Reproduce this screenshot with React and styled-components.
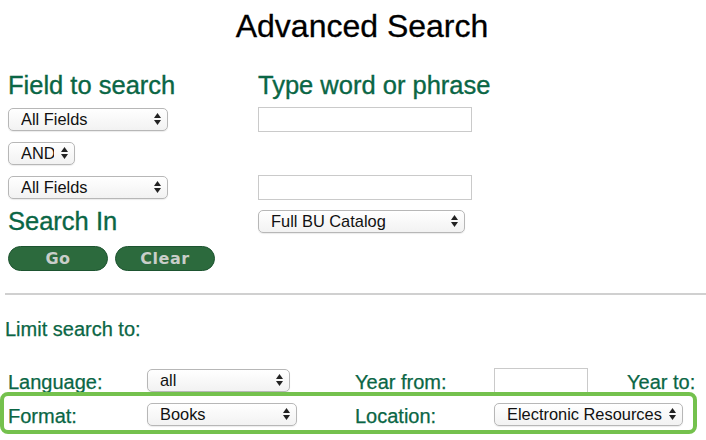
import React from 'react';
import styled, { createGlobalStyle } from 'styled-components';

const GlobalStyle = createGlobalStyle`
  html, body {
    margin: 0;
    padding: 0;
    background: #ffffff;
    font-family: "Liberation Sans", Arial, sans-serif;
  }
`;

const green = '#0a6645';

const Page = styled.div`
  width: 706px;
  height: 440px;
  overflow: hidden;
`;

const Title = styled.h1`
  margin: 11px 0 0;
  height: 30px;
  line-height: 30px;
  font-size: 32px;
  font-weight: normal;
  text-align: center;
  color: #000;
  padding-left: 18px;
  -webkit-text-stroke: 0.3px #000;
`;

const SearchGrid = styled.div`
  display: grid;
  grid-template-columns: 250px 1fr;
  grid-template-rows: 34px 34px 34px 34px 34px 40px;
  align-items: center;
  padding-left: 8px;
  margin-top: 27px;
`;

const Heading = styled.h2`
  margin: 0;
  font-size: 25.5px;
  line-height: 34px;
  font-weight: normal;
  color: ${green};
  -webkit-text-stroke: 0.35px ${green};
  white-space: nowrap;
`;

const SelectWrap = styled.div`
  position: relative;
  display: inline-flex;
  width: ${(p) => p.$w}px;
  height: 23px;
`;

const NativeSelect = styled.select`
  appearance: none;
  -webkit-appearance: none;
  width: 100%;
  height: 100%;
  margin: 0;
  padding: 0 20px 0 12px;
  border: 1px solid #b7b7b7;
  border-radius: 5px;
  background: linear-gradient(#ffffff, #f2f2f2);
  box-shadow: 0 1px 1px rgba(0, 0, 0, 0.08);
  font-family: "Liberation Sans", Arial, sans-serif;
  font-size: 16.4px;
  color: #111;
  outline: none;
`;

const Arrows = styled.svg`
  position: absolute;
  right: 7px;
  top: 50%;
  transform: translateY(-50%);
  pointer-events: none;
`;

const TextBox = styled.input`
  box-sizing: border-box;
  width: ${(p) => p.$w}px;
  height: 25px;
  margin: 0;
  border: 1px solid #cacaca;
  background: #fff;
  outline: none;
`;

const ButtonRow = styled.div`
  display: flex;
  gap: 7px;
`;

const PillButton = styled.button`
  box-sizing: border-box;
  width: 100px;
  height: 25px;
  padding: 0;
  border: 1px solid #1d5430;
  border-radius: 13px;
  background: #2c6a3d;
  color: #c9cec9;
  font-family: "DejaVu Sans", Verdana, sans-serif;
  font-weight: bold;
  font-size: 16px;
  letter-spacing: 0.5px;
  line-height: 23px;
`;

const Divider = styled.hr`
  margin: 15px 0 0 5px;
  border: none;
  height: 2px;
  background: #d0d0d0;
`;

const LimitTitle = styled.div`
  margin: 22px 0 0 5px;
  font-size: 20px;
  line-height: 24px;
  color: ${green};
  -webkit-text-stroke: 0.25px ${green};
`;

const LimitRows = styled.div`
  margin-top: 22px;
  padding-left: 8px;
`;

const LimitRow = styled.div`
  position: relative;
  display: grid;
  grid-template-columns: 139px 208px 139px 133px auto;
  height: 34px;
  align-items: center;

  ${(p) =>
    p.$highlight &&
    `
    &::after {
      content: '';
      position: absolute;
      top: -5px;
      bottom: -3px;
      left: -8px;
      right: 9px;
      border: 4px solid #74c14d;
      border-radius: 8px;
      pointer-events: none;
    }
  `}
`;

const Label = styled.span`
  font-size: 20px;
  line-height: 24px;
  color: ${green};
  -webkit-text-stroke: 0.25px ${green};
  white-space: nowrap;
  padding-top: 3px;
`;

function Select({ width, value }) {
  return (
    <SelectWrap $w={width}>
      <NativeSelect defaultValue={value}>
        <option>{value}</option>
      </NativeSelect>
      <Arrows width="7" height="13" viewBox="0 0 7 13">
        <path d="M3.5 0.5 L7 5.5 L0 5.5 Z" fill="#222" />
        <path d="M3.5 12.5 L7 7.5 L0 7.5 Z" fill="#222" />
      </Arrows>
    </SelectWrap>
  );
}

export default function App() {
  return (
    <Page>
      <GlobalStyle />
      <Title>Advanced Search</Title>
      <SearchGrid>
        <Heading>Field to search</Heading>
        <Heading>Type word or phrase</Heading>

        <Select width={160} value="All Fields" />
        <TextBox $w={214} />

        <Select width={67} value="AND" />
        <div />

        <Select width={160} value="All Fields" />
        <TextBox $w={214} />

        <Heading>Search In</Heading>
        <Select width={207} value="Full BU Catalog" />

        <ButtonRow>
          <PillButton>Go</PillButton>
          <PillButton>Clear</PillButton>
        </ButtonRow>
        <div />
      </SearchGrid>

      <Divider />
      <LimitTitle>Limit search to:</LimitTitle>

      <LimitRows>
        <LimitRow>
          <Label>Language:</Label>
          <Select width={143} value="all" />
          <Label>Year from:</Label>
          <TextBox $w={94} />
          <Label>Year to:</Label>
        </LimitRow>
        <LimitRow $highlight>
          <Label>Format:</Label>
          <Select width={150} value="Books" />
          <Label>Location:</Label>
          <Select width={189} value="Electronic Resources" />
          <div />
        </LimitRow>
      </LimitRows>
    </Page>
  );
}
